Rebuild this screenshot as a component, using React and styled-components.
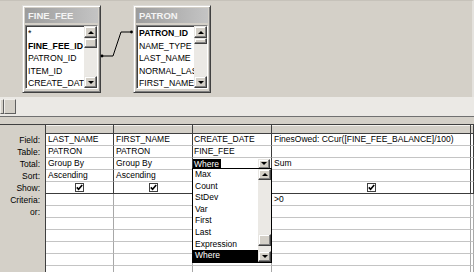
import React from "react";
import styled, { createGlobalStyle } from "styled-components";

const GlobalStyle = createGlobalStyle`
  html, body {
    margin: 0;
    padding: 0;
    background: #d4d0c8;
  }
  body {
    font-family: "Liberation Sans", Arial, sans-serif;
  }
`;

const Frame = styled.div`
  position: relative;
  width: 474px;
  height: 272px;
  overflow: hidden;
  background: #d4d0c8;
  font-family: "Liberation Sans", Arial, sans-serif;
  font-size: 8.5px;
  color: #000;
`;

/* ---------- upper pane: table windows on a free canvas ---------- */

const TopPane = styled.div`
  position: relative;
  height: 97px;
  box-sizing: border-box;
  background: #d4d0c8;
  border-top: 1px solid #c6c2ba;
  border-right: 2px solid #e4e2de;
`;

const TableWindow = styled.div`
  position: absolute;
  left: ${({ $x }) => $x}px;
  top: 4px;
  width: ${({ $w }) => $w}px;
  height: 88px;
  box-sizing: border-box;
  padding: 2px 2px 3px;
  background: #d4d0c8;
  border: 1px solid;
  border-color: #dcdad6 #404040 #404040 #dcdad6;
  box-shadow: inset 1px 1px 0 #ffffff, inset -1px -1px 0 #808080;
  display: flex;
  flex-direction: column;
  gap: 2px;
`;

const TitleBar = styled.div`
  height: 15px;
  flex-shrink: 0;
  padding-left: 3px;
  background: linear-gradient(to right, #9c9c9c, #c4c4c4);
  color: #f4f4f4;
  font-weight: bold;
  font-size: 9.5px;
  line-height: 15px;
`;

const ListBox = styled.div`
  flex: 1;
  display: flex;
  border: 1px solid;
  border-color: #808080 #ffffff #ffffff #808080;
  box-shadow: inset 1px 1px 0 #404040;
  background: #fff;
  overflow: hidden;
`;

const FieldList = styled.div`
  flex: 1;
  min-width: 0;
  padding: 1px 0 0 2px;
  overflow: hidden;
`;

const FieldItem = styled.div`
  height: 12.5px;
  line-height: 12.5px;
  white-space: nowrap;
  overflow: hidden;
  font-size: 8.7px;
  font-weight: ${({ $key }) => ($key ? "bold" : "normal")};
`;

const VScroll = styled.div`
  width: 13px;
  flex-shrink: 0;
  display: flex;
  flex-direction: column;
  background: #ebe9e5;
`;

const ScrollBtn = styled.div`
  height: ${({ $h }) => $h || 12}px;
  flex-shrink: 0;
  box-sizing: border-box;
  background: #d4d0c8;
  border: 1px solid;
  border-color: #e8e6e2 #404040 #404040 #e8e6e2;
  box-shadow: inset -1px -1px 0 #808080, inset 1px 1px 0 #ffffff;
  display: flex;
  align-items: center;
  justify-content: center;
`;

const Arrow = styled.span`
  width: 0;
  height: 0;
  border-left: 3px solid transparent;
  border-right: 3px solid transparent;
  ${({ $down }) =>
    $down
      ? "border-top: 3px solid #000;"
      : "border-bottom: 3px solid #000;"}
`;

const Track = styled.div`
  flex: ${({ $h }) => ($h ? `0 0 ${$h}px` : 1)};
`;

const Connector = styled.svg`
  position: absolute;
  left: 0;
  top: 0;
  width: 474px;
  height: 97px;
  pointer-events: none;
`;

/* ---------- horizontal scroller + splitter ---------- */

const HScroll = styled.div`
  height: 19px;
  box-sizing: border-box;
  padding-top: 2px;
  background: #ebe9e5;
  display: flex;
`;

const HStub = styled.div`
  width: ${({ $w }) => $w}px;
  height: 15px;
  box-sizing: border-box;
  background: #d4d0c8;
  border: 1px solid;
  border-color: #f0eeea #606060 #606060 #f0eeea;
`;

const Splitter = styled.div`
  height: 7px;
  border-top: 1px solid #707070;
  background: #d4d0c8;
`;

/* ---------- design grid ---------- */

const Grid = styled.div`
  border-top: 1px solid #404040;
`;

const Row = styled.div`
  display: grid;
  grid-template-columns: 46px 68px 79px 79px 199px 1fr;
  height: ${({ $h }) => $h}px;
`;

const Label = styled.div`
  box-sizing: border-box;
  border-right: 1px solid #404040;
  padding-right: 5px;
  text-align: right;
  line-height: 12px;
  white-space: nowrap;
  background: #d4d0c8;
`;

const HeadCell = styled.div`
  box-sizing: border-box;
  background: #d4d0c8;
  border-right: 1px solid #404040;
  border-bottom: 1px solid #404040;
  box-shadow: inset 0 1px 0 #f4f2ee;
`;

const Cell = styled.div`
  box-sizing: border-box;
  background: #fff;
  border-right: 1px solid ${({ $upper }) => ($upper ? "#3c3c3c" : "#a8a8a8")};
  border-bottom: 1px solid ${({ $dark }) => ($dark ? "#3c3c3c" : "#c4c4c4")};
  padding-left: ${({ $pad }) => ($pad === undefined ? 2 : $pad)}px;
  line-height: 11px;
  white-space: nowrap;
  overflow: hidden;
  display: flex;
  align-items: center;
  justify-content: ${({ $center }) => ($center ? "center" : "flex-start")};
`;

const Picked = styled.span`
  background: #000;
  color: #fff;
  padding: 0 2px 0 1px;
  line-height: 10px;
`;

const ComboBtn = styled(ScrollBtn)`
  width: 12px;
  height: 10px;
  margin-left: auto;
  margin-right: 1px;
`;

const CheckBox = styled.span`
  width: 9px;
  height: 9px;
  box-sizing: border-box;
  border: 1px solid #404040;
  background: #fff;
  display: flex;
  align-items: center;
  justify-content: center;
`;

/* ---------- open drop-down ---------- */

const DropList = styled.div`
  position: absolute;
  left: 192px;
  top: 168px;
  width: 80px;
  height: 95px;
  box-sizing: border-box;
  border: 1px solid #000;
  background: #fff;
  display: flex;
`;

const Options = styled.div`
  flex: 1;
`;

const Option = styled.div`
  height: 11.6px;
  line-height: 11.6px;
  padding-left: 2px;
  ${({ $active }) => $active && "background: #000; color: #fff;"}
`;

const Check = () => (
  <svg width="7" height="7" viewBox="0 0 7 7">
    <path d="M0.8 3.4 L2.6 5.3 L6.2 1.1" fill="none" stroke="#000" strokeWidth="1.6" />
  </svg>
);

const TableBox = ({ x, w, title, fields, thumb }) => (
  <TableWindow $x={x} $w={w}>
    <TitleBar>{title}</TitleBar>
    <ListBox>
      <FieldList>
        {fields.map((f) => (
          <FieldItem key={f.name} $key={f.key}>
            {f.name}
          </FieldItem>
        ))}
      </FieldList>
      <VScroll>
        <ScrollBtn>
          <Arrow />
        </ScrollBtn>
        <ScrollBtn $h={thumb} />
        <Track />
        <ScrollBtn>
          <Arrow $down />
        </ScrollBtn>
      </VScroll>
    </ListBox>
  </TableWindow>
);

const labels = ["Field:", "Table:", "Total:", "Sort:", "Show:", "Criteria:", "or:", "", "", "", "", ""];

const columns = [
  { Field: "LAST_NAME", Table: "PATRON", Total: "Group By", Sort: "Ascending", Show: true },
  { Field: "FIRST_NAME", Table: "PATRON", Total: "Group By", Sort: "Ascending", Show: true },
  { Field: "CREATE_DATE", Table: "FINE_FEE", Total: "Where", Sort: "", Show: false, combo: true },
  {
    Field: "FinesOwed: CCur([FINE_FEE_BALANCE]/100)",
    Table: "",
    Total: "Sum",
    Sort: "",
    Show: true,
    Criteria: ">0",
  },
  {},
];

const options = ["Max", "Count", "StDev", "Var", "First", "Last", "Expression", "Where"];

const renderCell = (col, label, i, rowIdx) => {
  const upper = rowIdx < 5;
  const dark = rowIdx === 4;
  const key = label.replace(":", "");
  if (key === "Show") {
    return (
      <Cell key={i} $upper={upper} $dark={dark} $center $pad={0}>
        {col.Show && (
          <CheckBox>
            <Check />
          </CheckBox>
        )}
      </Cell>
    );
  }
  if (key === "Total" && col.combo) {
    return (
      <Cell key={i} $upper={upper} $dark={dark} $pad={0}>
        <Picked>{col.Total}</Picked>
        <ComboBtn>
          <Arrow $down />
        </ComboBtn>
      </Cell>
    );
  }
  return (
    <Cell key={i} $upper={upper} $dark={dark} $pad={i === 2 ? 1 : 2}>
      {(key && col[key]) || ""}
    </Cell>
  );
};

export default function App() {
  return (
    <>
      <GlobalStyle />
      <Frame>
        <TopPane>
          <TableBox
            x={22}
            w={79}
            title="FINE_FEE"
            thumb={10}
            fields={[
              { name: "*" },
              { name: "FINE_FEE_ID", key: true },
              { name: "PATRON_ID" },
              { name: "ITEM_ID" },
              { name: "CREATE_DATE" },
            ]}
          />
          <TableBox
            x={133}
            w={78}
            title="PATRON"
            thumb={6}
            fields={[
              { name: "PATRON_ID", key: true },
              { name: "NAME_TYPE" },
              { name: "LAST_NAME" },
              { name: "NORMAL_LAST_NAME" },
              { name: "FIRST_NAME" },
            ]}
          />
          <Connector viewBox="0 0 474 97">
            <polyline
              points="101,55 113,55 121,31 132,31"
              fill="none"
              stroke="#000"
              strokeWidth="1"
            />
            <circle cx="102" cy="55" r="1.4" fill="#000" />
            <circle cx="131.5" cy="31" r="1.4" fill="#000" />
          </Connector>
        </TopPane>

        <HScroll>
          <HStub $w={4} />
          <HStub $w={12} />
        </HScroll>
        <Splitter />

        <Grid>
          <Row $h={9}>
            <Label />
            {columns.map((c, i) => (
              <HeadCell key={i} />
            ))}
          </Row>
          {labels.map((label, r) => (
            <Row key={r} $h={12}>
              <Label>{label}</Label>
              {columns.map((col, i) => renderCell(col, label, i, r))}
            </Row>
          ))}
        </Grid>

        <DropList>
          <Options>
            {options.map((o) => (
              <Option key={o} $active={o === "Where"}>
                {o}
              </Option>
            ))}
          </Options>
          <VScroll>
            <ScrollBtn $h={11}>
              <Arrow />
            </ScrollBtn>
            <Track />
            <ScrollBtn $h={12} />
            <Track $h={5} />
            <ScrollBtn $h={11}>
              <Arrow $down />
            </ScrollBtn>
          </VScroll>
        </DropList>
      </Frame>
    </>
  );
}
